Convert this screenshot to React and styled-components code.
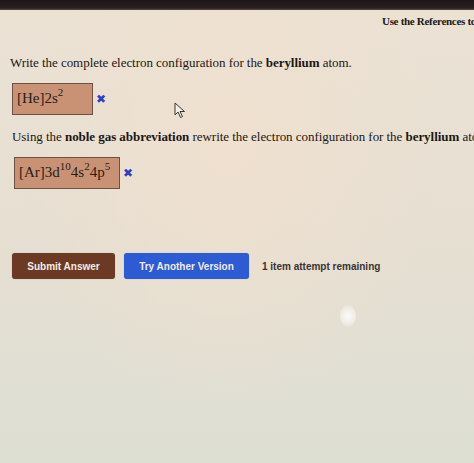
import React from 'react';
import styled, { createGlobalStyle } from 'styled-components';

const GlobalStyle = createGlobalStyle`
  html, body {
    margin: 0;
    padding: 0;
    height: 100%;
  }
  body {
    background: #e4ded2;
  }
`;

const Screen = styled.div`
  position: relative;
  width: 474px;
  height: 463px;
  overflow: hidden;
  background:
    radial-gradient(ellipse at 48% 30%, rgba(240, 224, 206, 0.9), rgba(240, 224, 206, 0) 60%),
    linear-gradient(180deg, #ebe2d4 0%, #e6dfd2 50%, #dddfd3 100%);
  font-family: "Liberation Serif", "Times New Roman", serif;
  color: #1c1714;
`;

const TopBar = styled.div`
  height: 10px;
  background: linear-gradient(180deg, #1d1518 0%, #2a2022 80%, #5a4540 100%);
`;

const Header = styled.div`
  padding: 5px 0 0 382px;
  font-size: 11px;
  letter-spacing: -0.3px;
  font-weight: bold;
  white-space: nowrap;
  overflow: hidden;
  height: 20px;
`;

const Question = styled.p`
  margin: ${({ $top }) => $top}px 0 0 ${({ $left }) => $left}px;
  font-size: 13px;
  white-space: nowrap;
  letter-spacing: -0.05px;
`;

const AnswerRow = styled.div`
  display: flex;
  align-items: center;
  gap: 3px;
  margin: ${({ $top }) => $top}px 0 0 ${({ $left }) => $left}px;
`;

const AnswerBox = styled.div`
  box-sizing: border-box;
  width: ${({ $w }) => $w}px;
  height: ${({ $h }) => $h}px;
  padding: 3px 0 0 4px;
  background: #c99275;
  border: 1px solid #6e5046;
  font-size: 15px;
  line-height: 22px;
  white-space: nowrap;
  color: #2a1c16;
`;

const Sup = styled.sup`
  font-size: 11px;
  vertical-align: 7px;
  line-height: 0;
`;

const Wrong = styled.span`
  color: #2d3cc9;
  font-size: 12px;
  font-family: "DejaVu Sans", sans-serif;
  font-weight: bold;
`;

const Actions = styled.div`
  display: flex;
  align-items: center;
  gap: 9px;
  margin: 64px 0 0 12px;
`;

const Button = styled.button`
  height: 26px;
  width: ${({ $w }) => $w}px;
  border: none;
  border-radius: 3px;
  background: ${({ $bg }) => $bg};
  color: #f2ece6;
  font-family: "Liberation Sans", Arial, sans-serif;
  font-size: 10px;
  font-weight: bold;
  padding: 0;
  box-shadow: 0 0 1px rgba(0, 0, 0, 0.3);
`;

const Status = styled.span`
  margin-left: 4px;
  font-family: "Liberation Sans", Arial, sans-serif;
  font-size: 10px;
  font-weight: bold;
  color: #3a3330;
`;

const Cursor = styled.svg`
  position: absolute;
  left: 174px;
  top: 102px;
`;

const Glare = styled.div`
  position: absolute;
  left: 340px;
  top: 305px;
  width: 16px;
  height: 22px;
  border-radius: 50%;
  background: radial-gradient(circle, rgba(255, 255, 255, 0.9), rgba(255, 255, 255, 0));
`;

export default function App() {
  return (
    <Screen>
      <GlobalStyle />
      <TopBar />
      <Header>Use the References to access important values if needed for this question.</Header>
      <Question $top={20} $left={10}>
        Write the complete electron configuration for the <b>beryllium</b> atom.
      </Question>
      <AnswerRow $top={12} $left={12}>
        <AnswerBox $w={81} $h={32}>
          [He]2s<Sup>2</Sup>
        </AnswerBox>
        <Wrong>✖</Wrong>
      </AnswerRow>
      <Question $top={14} $left={12}>
        Using the <b>noble gas abbreviation</b> rewrite the electron configuration for the <b>beryllium</b> atom.
      </Question>
      <AnswerRow $top={12} $left={14}>
        <AnswerBox $w={106} $h={32}>
          [Ar]3d<Sup>10</Sup>4s<Sup>2</Sup>4p<Sup>5</Sup>
        </AnswerBox>
        <Wrong>✖</Wrong>
      </AnswerRow>
      <Actions>
        <Button $w={103} $bg="#6c3a24">Submit Answer</Button>
        <Button $w={125} $bg="#2d5bd4">Try Another Version</Button>
        <Status>1 item attempt remaining</Status>
      </Actions>
      <Cursor width="12" height="17" viewBox="0 0 12 17">
        <path d="M1 1 L1 13 L4 10 L6.5 15.5 L8.5 14.5 L6 9.5 L10.5 9.5 Z" fill="#f4efe8" stroke="#3a3532" strokeWidth="1" strokeLinejoin="round" />
      </Cursor>
      <Glare />
    </Screen>
  );
}
